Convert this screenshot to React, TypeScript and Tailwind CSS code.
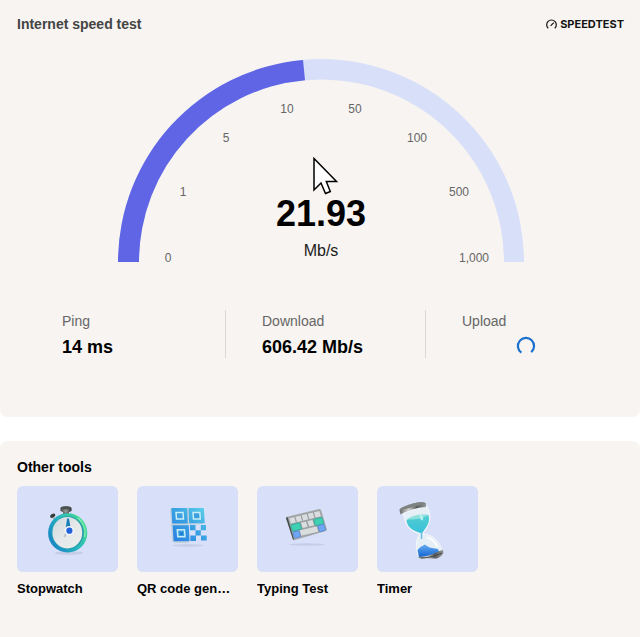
import type { ReactNode } from "react";

interface Tool {
  name: string;
  icon: ReactNode;
}

const TICKS = [
  { label: "0", x: 50, y: 203 },
  { label: "1", x: 65, y: 137 },
  { label: "5", x: 108, y: 83 },
  { label: "10", x: 169, y: 54 },
  { label: "50", x: 237, y: 54 },
  { label: "100", x: 299, y: 83 },
  { label: "500", x: 341, y: 137 },
  { label: "1,000", x: 356, y: 203 },
];

function SpeedtestLogo() {
  return (
    <a
      href="#"
      className="flex items-center gap-[3px] font-[Inter,sans-serif] text-[11px] leading-4 font-bold text-[#141414]"
    >
      <svg width="11" height="11" viewBox="0 0 11 11" fill="none">
        <path
          d="M2.2 9.3A4.8 4.8 0 1 1 8.8 9.3"
          stroke="currentColor"
          strokeWidth="1.2"
        />
        <path d="M4.6 6.8 7.8 3.6" stroke="currentColor" strokeWidth="1.2" />
      </svg>
      <span>SPEEDTEST</span>
    </a>
  );
}

function Cursor() {
  return (
    <svg
      className="pointer-events-none absolute top-[98px] left-1/2 -ml-2"
      width="26"
      height="39"
      viewBox="0 0 26 39"
    >
      <path
        d="M1 1.5V33L8 26L12.500 36.500L17.300 34.500L13.300 24.500H23.500Z"
        fill="#fff"
        stroke="#000"
        strokeWidth="1.5"
      />
    </svg>
  );
}

function Gauge() {
  return (
    <div className="relative mx-auto w-full max-w-[406px]">
      <svg className="block w-full overflow-visible" viewBox="0 0 406 203">
        <path
          d="M0 203A203 203 0 0 1 406 203H386A182.5 182.5 0 0 0 21 203Z"
          fill="#d8dff9"
        />
        <path
          d="M0 203A203 203 0 0 1 185 1L187 21.200A182.500 182.500 0 0 0 21 203Z"
          fill="#5f65e4"
        />
        {TICKS.map((tick) => (
          <text
            key={tick.label}
            x={tick.x}
            y={tick.y}
            textAnchor="middle"
            fontSize="12"
            fill="#666"
          >
            {tick.label}
          </text>
        ))}
      </svg>
      <div className="absolute inset-x-0 bottom-0 text-center">
        <p className="text-4xl leading-10 font-bold text-black">21.93</p>
        <p className="pt-1.5 text-base leading-[22px] text-[#1b1b1b]">Mb/s</p>
      </div>
      <Cursor />
    </div>
  );
}

function Spinner() {
  return (
    <svg
      className="mx-auto mt-1"
      width="20"
      height="20"
      viewBox="0 0 20 20"
      fill="none"
      role="status"
      aria-label="Testing upload"
    >
      <path
        d="M5.400 16.700A8.100 8.100 0 1 1 15.200 16.200"
        stroke="#1a6fcf"
        strokeWidth="2.2"
      />
    </svg>
  );
}

function Stat({ label, children }: { label: string; children: ReactNode }) {
  return (
    <div className="h-12 border-r border-[#dbd8d6] last:border-r-0">
      <dt className="pl-9 text-sm leading-[22px] text-[#666]">{label}</dt>
      <dd className="text-lg leading-[30px] font-bold text-black">
        {children}
      </dd>
    </div>
  );
}

function StopwatchIcon() {
  return (
    <svg className="w-full" viewBox="0 0 101 86">
      <defs>
        <linearGradient id="sw-ring" x1="0" y1="0.8" x2="1" y2="0.2">
          <stop offset="0" stopColor="#177fc6" />
          <stop offset="0.5" stopColor="#24b5bf" />
          <stop offset="1" stopColor="#4de28c" />
        </linearGradient>
        <linearGradient id="sw-metal" x1="0" y1="0" x2="1" y2="0">
          <stop offset="0" stopColor="#3b403f" />
          <stop offset="0.5" stopColor="#9da19d" />
          <stop offset="1" stopColor="#222827" />
        </linearGradient>
        <linearGradient id="sw-face" x1="0" y1="0" x2="1" y2="1">
          <stop offset="0" stopColor="#ccd9df" />
          <stop offset="0.5" stopColor="#e4e8e8" />
          <stop offset="1" stopColor="#efefef" />
        </linearGradient>
      </defs>
      <ellipse cx="52" cy="67" rx="14" ry="1.8" fill="#c5cce8" />
      <rect x="46" y="24" width="6" height="5" fill="#626b68" />
      <path
        d="M43.5 22Q49 18 54.5 22V25Q49 28.5 43.5 25Z"
        fill="url(#sw-metal)"
      />
      <ellipse cx="49" cy="21.8" rx="5.3" ry="1.6" fill="#4a504e" />
      <path d="M36 31L39 34" stroke="#b5bbb8" strokeWidth="2.5" />
      <ellipse
        cx="35.7"
        cy="29.7"
        rx="2.8"
        ry="1.8"
        transform="rotate(-28 35.7 29.7)"
        fill="#373d3b"
      />
      <circle cx="50.7" cy="46.9" r="19.6" fill="url(#sw-ring)" />
      <ellipse cx="51" cy="46.6" rx="15.9" ry="16.3" fill="#2b9fa8" />
      <ellipse cx="50.3" cy="46.7" rx="14.9" ry="15.7" fill="url(#sw-face)" />
      <path
        d="M61 32A19 19 0 0 1 67.5 51"
        fill="none"
        stroke="#85efb2"
        strokeWidth="1.300"
      />
      <path d="M50 33L48.6 43.5H54L52 33Q51 31.5 50 33Z" fill="#177db8" />
      <path d="M49 47L47.5 51" stroke="#b9c4d0" strokeWidth="2" />
      <circle cx="52.2" cy="44.8" r="4.7" fill="#f3f6fc" />
      <circle cx="52.4" cy="44.7" r="3.1" fill="#1f62dc" />
    </svg>
  );
}

function QrIcon() {
  return (
    <svg className="w-full" viewBox="0 0 101 86">
      <defs>
        <linearGradient
          id="qr-blue"
          x1="36"
          y1="56"
          x2="68"
          y2="22"
          gradientUnits="userSpaceOnUse"
        >
          <stop offset="0" stopColor="#2b7fe4" />
          <stop offset="0.5" stopColor="#379fe2" />
          <stop offset="1" stopColor="#5dd0e9" />
        </linearGradient>
      </defs>
      <ellipse cx="51" cy="59.500" rx="15" ry="1.400" fill="#c8cfea" />
      <path d="M33 23L35 55L37 57H52L50 54L51 39L66 38L65 23Z" fill="#c4d2de" />
      <g fill="url(#qr-blue)">
        <path d="M34.3 22H50.2L50.8 37.5H35.3Z" />
        <path d="M51.5 22H66.8L67.8 37.3H52.2Z" />
        <path d="M35.6 39.3H51.8L52.5 55.3H36.6Z" />
        <path d="M53 39H58.5V44.3H53ZM63.8 39H69V44.3H63.8ZM58.5 44.3H63.8V49.6H58.5ZM53.3 49.6H59V55H53.3ZM64 49.6H69.7V54.5H64Z" />
      </g>
      <g fill="#3d9fdf" stroke="#c7edf7" strokeWidth="1.5">
        <path d="M39 26.5H46L46.5 33H39.5Z" />
        <path d="M56 26.5H62.8L63.3 33H56.5Z" />
        <path d="M40.3 43.8H47.5L48 50.8H40.8Z" />
      </g>
      <path d="M42.7 45.9H45.9V48.9H42.7Z" fill="#247fd5" />
    </svg>
  );
}

function KeyboardIcon() {
  return (
    <svg className="w-full" viewBox="0 0 101 86">
      <ellipse cx="50" cy="58.5" rx="18" ry="1.2" fill="#c5cce8" />
      <path
        d="M29 32Q29 31 30 30.7L62 23Q63.5 22.7 64 24L70 43.5L69 45L38 54Q36.500 54.500 36 53Z"
        fill="#a6aaac"
      />
      <path d="M29 32L30.5 31L37 53.5L36 53.7Z" fill="#444c4b" />
      <g transform="matrix(.343 -.083 .11 .36 30.5 31.5)">
        <g fill="#dadddd" stroke="#8c9397" strokeWidth="1.600">
          <rect x="3" y="2" width="17" height="17" rx="2" />
          <rect x="21" y="2" width="17" height="17" rx="2" />
          <rect x="39" y="2" width="17" height="17" rx="2" />
          <rect x="57" y="2" width="17" height="17" rx="2" />
          <rect x="75" y="2" width="18" height="17" rx="2" />
          <rect x="31" y="21" width="17" height="17" rx="2" />
          <rect x="50" y="21" width="17" height="17" rx="2" />
          <rect x="21" y="40" width="52" height="17" rx="2" />
        </g>
        <g fill="#3fd0b4" stroke="#219c8b" strokeWidth="1.6">
          <rect x="2" y="21" width="27" height="18" rx="2" />
          <rect x="69" y="21" width="25" height="18" rx="2" />
        </g>
        <g fill="#6ea6f3" stroke="#4f80d2" strokeWidth="1.6">
          <rect x="2" y="41" width="18" height="17" rx="2" />
          <rect x="75" y="40" width="18" height="17" rx="2" />
        </g>
      </g>
    </svg>
  );
}

function HourglassIcon() {
  return (
    <svg className="w-full" viewBox="0 0 101 86">
      <defs>
        <linearGradient id="hg-metal" x1="0" y1="0" x2="1" y2="0">
          <stop offset="0" stopColor="#626766" />
          <stop offset="0.35" stopColor="#d4d5d3" />
          <stop offset="0.65" stopColor="#555958" />
          <stop offset="1" stopColor="#969b9b" />
        </linearGradient>
        <linearGradient id="hg-teal" x1="0" y1="0" x2="0" y2="1">
          <stop offset="0" stopColor="#52cfd3" />
          <stop offset="1" stopColor="#38bfd9" />
        </linearGradient>
        <linearGradient id="hg-blue" x1="0" y1="0" x2="0" y2="1">
          <stop offset="0" stopColor="#65aef0" />
          <stop offset="1" stopColor="#1565d4" />
        </linearGradient>
      </defs>
      <path
        d="M26 27L50 20Q55 31 51.500 38Q49 44 45.500 48Q53 48 58 53Q64 58 65 66Q55 72 42 72Q37 59 41 51L43 48Q32 45 29 37Z"
        fill="#e6eef6"
        stroke="#f3f7fa"
      />
      <path
        d="M29.5 34Q40 28 51.500 29Q53 35 50 40Q47 44 45 47.500Q35 45 31.500 40Q29.500 37 29.500 34Z"
        fill="url(#hg-teal)"
      />
      <path d="M29.5 33.5Q39 27 51.500 29Q43 34 29.500 33.500Z" fill="#90e1dd" />
      <path d="M42.5 29Q47 28.500 46 34.500Q43 34.500 42.500 29Z" fill="#b9f0ee" />
      <path d="M44.500 46V53" stroke="#6cbfdf" strokeWidth="1.5" />
      <path
        d="M40.500 64Q44 60 48 58.500Q51 62 61 63L62 66Q53 71 42 71Z"
        fill="url(#hg-blue)"
      />
      <path
        d="M50 51.500Q57 53 60.500 61"
        fill="none"
        stroke="#fff"
        strokeWidth="2"
        opacity=".8"
      />
      <path
        d="M22.5 24Q23 21 34 18Q46 15 49 17.500V21Q42 21 35 23.500Q26 26.500 23.500 28.500Z"
        fill="url(#hg-metal)"
      />
      <path
        d="M23 24Q26 20 36 17.500Q46 15 49 17.500Q43 19 36 21Q27 23.500 23 24Z"
        fill="#7e8382"
      />
      <path
        d="M41 71Q49 71 56 68Q64 64 66 64L66.500 67Q65 70 60 72.500H43Z"
        fill="url(#hg-metal)"
      />
      <path d="M44 72Q53 72 65 67" fill="none" stroke="#414746" />
    </svg>
  );
}

const TOOLS: Tool[] = [
  { name: "Stopwatch", icon: <StopwatchIcon /> },
  { name: "QR code generator", icon: <QrIcon /> },
  { name: "Typing Test", icon: <KeyboardIcon /> },
  { name: "Timer", icon: <HourglassIcon /> },
];

export default function App() {
  return (
    <main className="flex min-h-screen flex-col gap-6 bg-white font-['Liberation_Sans',Arial,sans-serif]">
      <section className="rounded-b-lg bg-[#f7f4f1] pt-3 pb-[59px]">
        <header className="flex items-center justify-between pr-4 pl-[17px]">
          <h1 className="text-sm leading-6 font-bold text-[#444]">
            Internet speed test
          </h1>
          <SpeedtestLogo />
        </header>
        <div className="pt-[23px] pr-[15px] pl-[17px]">
          <Gauge />
        </div>
        <dl className="grid grid-cols-3 pt-12 pr-[14px] pl-[26px]">
          <Stat label="Ping">
            <span className="block pl-9">14 ms</span>
          </Stat>
          <Stat label="Download">
            <span className="block pl-9">606.42 Mb/s</span>
          </Stat>
          <Stat label="Upload">
            <Spinner />
          </Stat>
        </dl>
      </section>

      <section className="grow rounded-t-lg bg-[#f7f4f1] px-[17px] pt-4 pb-8">
        <h2 className="text-sm leading-5 font-bold text-black">Other tools</h2>
        <ul className="flex flex-wrap gap-[19px] pt-[9px]">
          {TOOLS.map((tool) => (
            <li key={tool.name} className="w-[101px]">
              <a href="#" className="block">
                <span className="flex h-[86px] overflow-hidden rounded-md bg-[#d8dff9]">
                  {tool.icon}
                </span>
                <span className="mr-1.5 block truncate pt-[7px] text-[13px] leading-5 font-bold text-black">
                  {tool.name}
                </span>
              </a>
            </li>
          ))}
        </ul>
      </section>
    </main>
  );
}
